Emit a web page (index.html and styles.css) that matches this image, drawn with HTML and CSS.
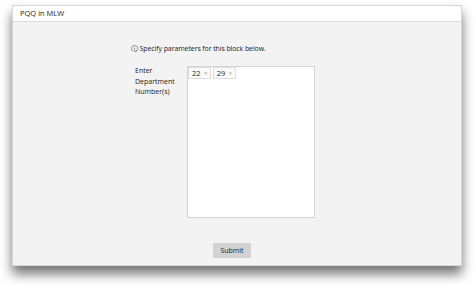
FILE: index.html
```html
<!DOCTYPE html>
<html lang="en">
<head>
    <meta charset="UTF-8">
    <title>PQQ in MLW</title>
    <link rel="stylesheet" href="styles.css">
</head>
<body>
    <div class="window">
        <div class="title-bar">PQQ in MLW</div>
        <div class="window-body">
            <p class="hint">&#9432; Specify parameters for this block below.</p>

            <div class="param-row">
                <label class="param-label" for="deptInput">Enter Department Number(s)</label>
                <div class="tag-box" id="deptInput">
                    <span class="tag">22 <span class="tag-x">&times;</span></span>
                    <span class="tag">29 <span class="tag-x">&times;</span></span>
                </div>
            </div>

            <div class="actions">
                <button class="submit-btn">Submit</button>
            </div>
        </div>
    </div>
</body>
</html>
```

FILE: styles.css
```css
/* window frame */
html, body {
    height: 100%;
}

body {
    margin: 0;
    background-color: #ffffff;
    font-family: "Open Sans", "Noto Sans", sans-serif;
    color: #222222;
}

.window {
    margin: 5px 12px 0 12px;
    width: 450px;
    height: 261px;
    box-sizing: border-box;
    border: 1px solid #d6d6d6;
    background-color: #f3f3f3;
    box-shadow: 0 8px 11px rgba(0, 0, 0, 0.55);
    display: flex;
    flex-direction: column;
}

.title-bar {
    height: 15px;
    line-height: 15px;
    padding-left: 7px;
    background-color: #ffffff;
    border-bottom: 1px solid #dcdcdc;
    font-size: 7.5px;
    color: #1e1e1e;
}

.window-body {
    flex-grow: 1;
    padding: 22px 0 0 118px;
}

.hint {
    margin: 0;
    font-size: 7px;
    line-height: 10px;
    color: #222222;
    letter-spacing: -0.1px;
}

/* parameter form */
.param-row {
    display: flex;
    margin-top: 12px;
    margin-left: 4px;
}

.param-label {
    width: 52px;
    font-size: 7px;
    line-height: 10.5px;
    color: #222222;
}

.tag-box {
    width: 128px;
    height: 152px;
    box-sizing: border-box;
    background-color: #ffffff;
    border: 1px solid #d4d4d4;
    padding: 0;
    display: flex;
    align-items: flex-start;
    gap: 2px;
}

.tag {
    font-size: 7.5px;
    line-height: 10px;
    padding: 0 2px 0 3px;
    border: 1px solid #dddddd;
    background-color: #fafafa;
    color: #1e1e1e;
}

.tag-x {
    color: #b4b4b4;
    margin-left: 1px;
}

.actions {
    display: flex;
    margin-top: 25px;
    padding-left: 82px;
}

.submit-btn {
    width: 38px;
    height: 15px;
    padding: 0;
    border: none;
    border-radius: 1px;
    background-color: #d2d2d2;
    font-family: "Open Sans", "Noto Sans", sans-serif;
    font-size: 7px;
    color: #1e1e1e;
}
```
